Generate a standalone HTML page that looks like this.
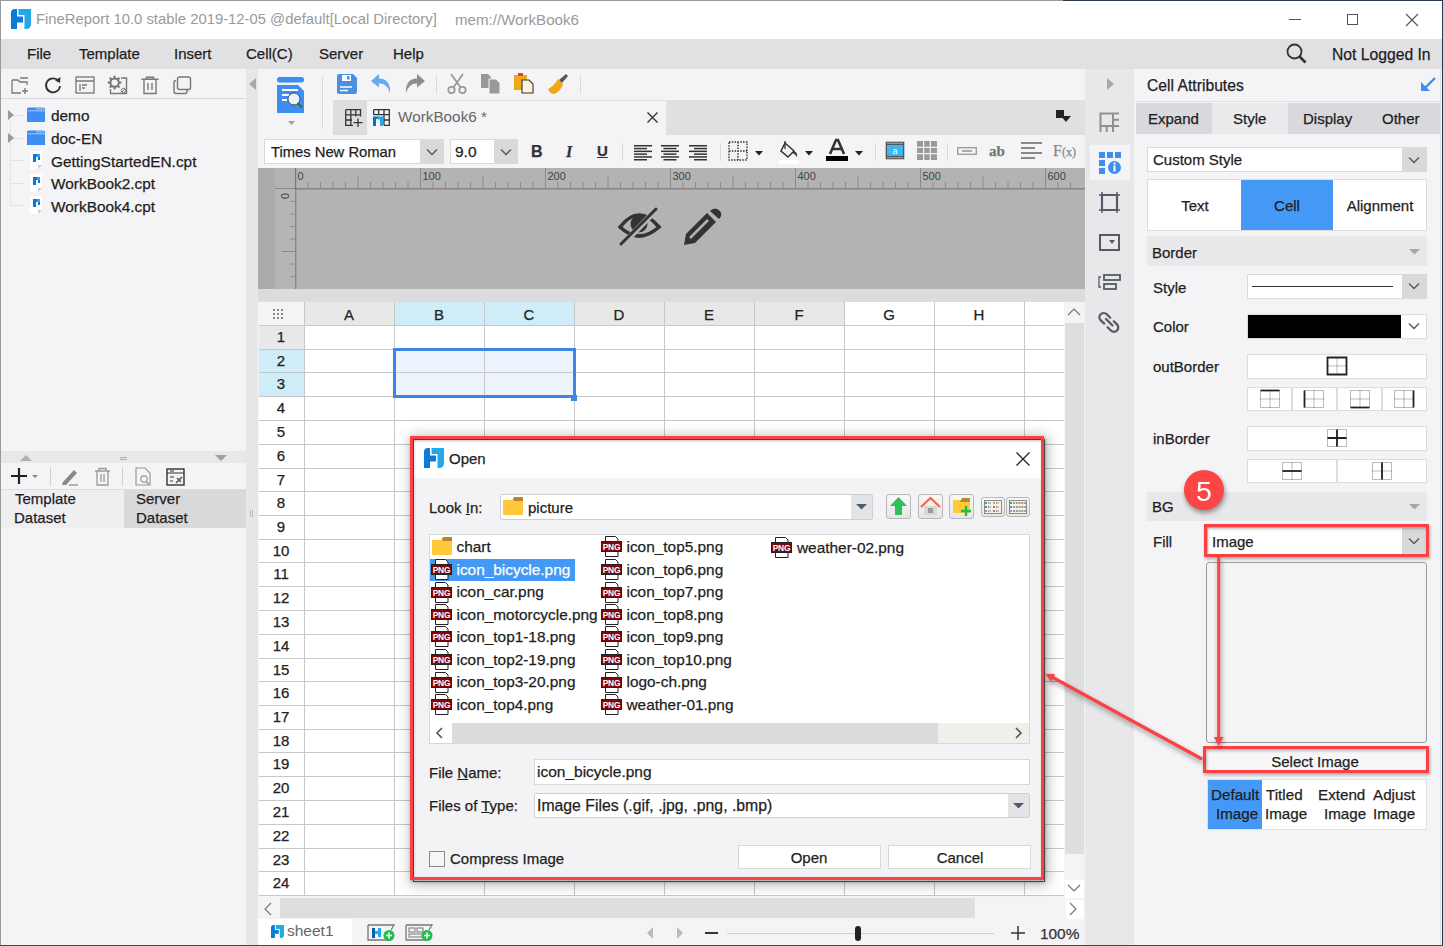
<!DOCTYPE html><html><head><meta charset="utf-8"><style>
html,body{margin:0;padding:0;width:1443px;height:946px;overflow:hidden;background:#f4f4f6}
body{position:relative;font-family:"Liberation Sans",sans-serif}
div{position:absolute}
.t{position:absolute;white-space:pre;line-height:1;font-family:"Liberation Sans",sans-serif;-webkit-text-stroke:0.25px currentColor}
svg{overflow:visible}
</style></head><body>
<div style="left:0px;top:0px;width:1443px;height:39px;background:#ffffff;"></div>
<div style="left:0px;top:0px;width:1443px;height:1px;background:#9a9a9a;"></div>
<div style="left:1063px;top:0px;width:380px;height:1px;background:#2b3a4a;"></div>
<svg style="position:absolute;left:11px;top:9px;" width="20" height="20" viewBox="0 0 20 20"><g transform="scale(1.0)"><path d="M4 0 H6 V7.5 H12 V13.5 H6 V20 H0 V4 Q0 0 4 0Z" fill="#0a7bd8"/><path d="M7.5 0 H20 V15 Q20 20 15 20 H13.5 V6 H7.5Z" fill="#22a9e6"/></g></svg>
<span class="t" style="left:36px;top:12.44px;font-size:14.84px;color:#9a9a9a;-webkit-text-stroke:0">FineReport 10.0 stable 2019-12-05 @default[Local Directory]</span>
<span class="t" style="left:455px;top:12.22px;font-size:15.1px;color:#9a9a9a;-webkit-text-stroke:0">mem://WorkBook6</span>
<div style="left:1289px;top:19px;width:12px;height:1px;background:#555;"></div>
<div style="left:1347px;top:14px;width:11px;height:11px;background:transparent;border:1px solid #555;box-sizing:border-box"></div>
<svg style="position:absolute;left:1405px;top:13px;" width="14" height="14" viewBox="0 0 14 14"><path d="M1 1 L13 13 M13 1 L1 13" stroke="#555" stroke-width="1.1"/></svg>
<div style="left:0px;top:39px;width:1443px;height:30px;background:#e1e1e4;"></div>
<span class="t" style="left:27px;top:46.30px;font-size:15px;color:#1e1e1e;">File</span>
<span class="t" style="left:79px;top:46.30px;font-size:15px;color:#1e1e1e;">Template</span>
<span class="t" style="left:174px;top:46.30px;font-size:15px;color:#1e1e1e;">Insert</span>
<span class="t" style="left:246px;top:46.30px;font-size:15px;color:#1e1e1e;">Cell(C)</span>
<span class="t" style="left:319px;top:46.30px;font-size:15px;color:#1e1e1e;">Server</span>
<span class="t" style="left:393px;top:46.30px;font-size:15px;color:#1e1e1e;">Help</span>
<svg style="position:absolute;left:1286px;top:43px;" width="22" height="22" viewBox="0 0 22 22"><circle cx="8.5" cy="8.5" r="7" fill="none" stroke="#333" stroke-width="1.8"/><path d="M13.5 13.5 L19.5 19.5" stroke="#333" stroke-width="2.6"/></svg>
<span class="t" style="left:1332px;top:46.71px;font-size:15.7px;color:#1e1e1e;">Not Logged In</span>
<div style="left:1px;top:69px;width:245px;height:876px;background:#f4f4f6;"></div>
<div style="left:0px;top:0px;width:1px;height:946px;background:#9a9a9a;"></div>
<div style="left:1px;top:98px;width:245px;height:1px;background:#d9d9db;"></div>
<svg style="position:absolute;left:11px;top:76px;" width="20" height="18" viewBox="0 0 20 18"><path d="M1 4 H7 L9 6 H16 V9 M1 4 V17 H10" fill="none" stroke="#777" stroke-width="1.3"/><path d="M9 2 H17 M14 12 V18 M11 15 H17" stroke="#777" stroke-width="1.3"/></svg>
<svg style="position:absolute;left:44px;top:76px;" width="18" height="18" viewBox="0 0 18 18"><path d="M14.5 5 A7 7 0 1 0 16 10" fill="none" stroke="#333" stroke-width="1.9"/><path d="M11 4.5 L16.5 1 L16 7Z" fill="#333"/></svg>
<svg style="position:absolute;left:75px;top:76px;" width="20" height="18" viewBox="0 0 20 18"><rect x="1" y="1" width="18" height="16" fill="none" stroke="#777" stroke-width="1.3"/><path d="M1 5 H19 M5 8 V15 M7 9 H12 M7 12 H10" stroke="#777" stroke-width="1.3"/></svg>
<svg style="position:absolute;left:108px;top:76px;" width="20" height="18" viewBox="0 0 20 18"><rect x="5.5" y="-0.2" width="2.2" height="3" transform="rotate(0 6.6 6.6)" fill="#777"/><rect x="5.5" y="-0.2" width="2.2" height="3" transform="rotate(45 6.6 6.6)" fill="#777"/><rect x="5.5" y="-0.2" width="2.2" height="3" transform="rotate(90 6.6 6.6)" fill="#777"/><rect x="5.5" y="-0.2" width="2.2" height="3" transform="rotate(135 6.6 6.6)" fill="#777"/><rect x="5.5" y="-0.2" width="2.2" height="3" transform="rotate(180 6.6 6.6)" fill="#777"/><rect x="5.5" y="-0.2" width="2.2" height="3" transform="rotate(225 6.6 6.6)" fill="#777"/><rect x="5.5" y="-0.2" width="2.2" height="3" transform="rotate(270 6.6 6.6)" fill="#777"/><rect x="5.5" y="-0.2" width="2.2" height="3" transform="rotate(315 6.6 6.6)" fill="#777"/><circle cx="6.6" cy="6.6" r="4.2" fill="none" stroke="#777" stroke-width="2"/><path d="M13 2 H18.5 V17.5 H2.5 V13" fill="none" stroke="#777" stroke-width="1.4"/><circle cx="15.5" cy="14.5" r="2.2" fill="none" stroke="#777" stroke-width="1"/><path d="M14 16 L17 13" stroke="#777" stroke-width="1"/></svg>
<svg style="position:absolute;left:141px;top:76px;" width="18" height="18" viewBox="0 0 18 18"><path d="M0.5 3.3 H17.5 M5.5 3.3 V1.2 H12.5 V3.3 M3 4 V17.5 H15 V4 M7 7 V14 M11 7 V14" fill="none" stroke="#777" stroke-width="1.4"/></svg>
<svg style="position:absolute;left:173px;top:76px;" width="19" height="18" viewBox="0 0 19 18"><rect x="4.5" y="1" width="13" height="12.5" rx="2" fill="none" stroke="#777" stroke-width="1.4"/><path d="M3 4.5 Q1 4.5 1 6.5 V15.5 Q1 17.5 3 17.5 H12 Q14 17.5 14 15.5 V14" fill="none" stroke="#777" stroke-width="1.4"/></svg>
<div style="left:10px;top:122px;width:1px;height:84px;background:#e2e2e4;"></div>
<div style="left:11px;top:160px;width:13px;height:1px;background:#e2e2e4;"></div>
<div style="left:11px;top:183px;width:13px;height:1px;background:#e2e2e4;"></div>
<div style="left:11px;top:205px;width:13px;height:1px;background:#e2e2e4;"></div>
<div style="left:14px;top:115px;width:10px;height:1px;background:#e2e2e4;"></div>
<div style="left:14px;top:138px;width:10px;height:1px;background:#e2e2e4;"></div>
<svg style="position:absolute;left:8px;top:110px;" width="7" height="10" viewBox="0 0 7 10"><path d="M0 0 L6 5 L0 10Z" fill="#999"/></svg>
<svg style="position:absolute;left:27px;top:107px;" width="18" height="15" viewBox="0 0 18 15"><path d="M0 2 Q0 0.5 1.5 0.5 H16.5 Q18 0.5 18 2 V15 H0Z" fill="#3d8ef0"/><path d="M9 1.8 H17 M0.5 3.8 H18" stroke="#ffffff" stroke-width="0.9" opacity="0.6"/></svg>
<span class="t" style="left:51px;top:108.46px;font-size:15.4px;color:#1e1e1e;">demo</span>
<svg style="position:absolute;left:8px;top:133px;" width="7" height="10" viewBox="0 0 7 10"><path d="M0 0 L6 5 L0 10Z" fill="#999"/></svg>
<svg style="position:absolute;left:27px;top:130px;" width="18" height="15" viewBox="0 0 18 15"><path d="M0 2 Q0 0.5 1.5 0.5 H16.5 Q18 0.5 18 2 V15 H0Z" fill="#3d8ef0"/><path d="M9 1.8 H17 M0.5 3.8 H18" stroke="#ffffff" stroke-width="0.9" opacity="0.6"/></svg>
<span class="t" style="left:51px;top:131.06px;font-size:15.4px;color:#1e1e1e;">doc-EN</span>
<svg style="position:absolute;left:28px;top:151px;" width="16" height="18" viewBox="0 0 16 18"><path d="M2 0 H14 V14 L10 18 H2Z" fill="#fff"/><path d="M14 14 L10 18 V14Z" fill="#ccc"/><path d="M5 3 H12 V9 H10 V6 H8 V11 H5Z" fill="#0b78d6"/><rect x="9" y="3" width="3" height="3" fill="#29a7ea"/></svg>
<span class="t" style="left:51px;top:153.66px;font-size:15.4px;color:#1e1e1e;">GettingStartedEN.cpt</span>
<svg style="position:absolute;left:28px;top:174px;" width="16" height="18" viewBox="0 0 16 18"><path d="M2 0 H14 V14 L10 18 H2Z" fill="#fff"/><path d="M14 14 L10 18 V14Z" fill="#ccc"/><path d="M5 3 H12 V9 H10 V6 H8 V11 H5Z" fill="#0b78d6"/><rect x="9" y="3" width="3" height="3" fill="#29a7ea"/></svg>
<span class="t" style="left:51px;top:176.26px;font-size:15.4px;color:#1e1e1e;">WorkBook2.cpt</span>
<svg style="position:absolute;left:28px;top:196px;" width="16" height="18" viewBox="0 0 16 18"><path d="M2 0 H14 V14 L10 18 H2Z" fill="#fff"/><path d="M14 14 L10 18 V14Z" fill="#ccc"/><path d="M5 3 H12 V9 H10 V6 H8 V11 H5Z" fill="#0b78d6"/><rect x="9" y="3" width="3" height="3" fill="#29a7ea"/></svg>
<span class="t" style="left:51px;top:198.86px;font-size:15.4px;color:#1e1e1e;">WorkBook4.cpt</span>
<div style="left:1px;top:451px;width:245px;height:12px;background:#e8e8ea;"></div>
<svg style="position:absolute;left:20px;top:455px;" width="12" height="6" viewBox="0 0 12 6"><path d="M0 6 L6 0 L12 6Z" fill="#b0b0b0"/></svg>
<div style="left:120px;top:457px;width:7px;height:1px;background:#b0b0b0;"></div>
<div style="left:120px;top:459px;width:7px;height:1px;background:#b0b0b0;"></div>
<svg style="position:absolute;left:215px;top:455px;" width="12" height="6" viewBox="0 0 12 6"><path d="M0 0 L6 6 L12 0Z" fill="#a0a0a0"/></svg>
<svg style="position:absolute;left:10px;top:466px;" width="30" height="20" viewBox="0 0 30 20"><path d="M9 2 V18 M1 10 H17" stroke="#222" stroke-width="2.2"/><path d="M22 9 H28 L25 12Z" fill="#888"/></svg>
<div style="left:50px;top:467px;width:1px;height:19px;background:#d0d0d0;"></div>
<svg style="position:absolute;left:61px;top:467px;" width="18" height="19" viewBox="0 0 18 19"><path d="M2 15 L13 3 L16 6 L5 18 L1 18Z" fill="#888"/><path d="M8 18 H17" stroke="#888" stroke-width="1.2"/></svg>
<svg style="position:absolute;left:94px;top:467px;" width="17" height="19" viewBox="0 0 17 19"><path d="M1 4 H16 M5 4 V1.5 H12 V4 M3 4 V18 H14 V4 M7 7 V15 M10 7 V15" fill="none" stroke="#999" stroke-width="1.3"/></svg>
<div style="left:122px;top:467px;width:1px;height:19px;background:#d0d0d0;"></div>
<svg style="position:absolute;left:135px;top:467px;" width="16" height="19" viewBox="0 0 16 19"><path d="M1 1 H10 L15 6 V18 H1Z" fill="none" stroke="#999" stroke-width="1.2"/><circle cx="9" cy="12" r="3.2" fill="none" stroke="#999" stroke-width="1.2"/><path d="M11 14.5 L14 17.5" stroke="#999" stroke-width="1.4"/></svg>
<svg style="position:absolute;left:166px;top:468px;" width="19" height="18" viewBox="0 0 19 18"><rect x="1" y="1" width="17" height="16" fill="none" stroke="#333" stroke-width="1.4"/><path d="M1 5 H18 M4 3 H8 M4 9 H8 M4 13 H7" stroke="#333" stroke-width="1.2"/><path d="M10 15 L16 9 M11 10 L15 14" stroke="#555" stroke-width="1.6"/></svg>
<div style="left:1px;top:489px;width:245px;height:1px;background:#dddddf;"></div>
<div style="left:1px;top:490px;width:123px;height:38px;background:#efeff2;"></div>
<div style="left:124px;top:490px;width:122px;height:38px;background:#d9d9dc;"></div>
<span class="t" style="left:15px;top:491.30px;font-size:15px;color:#1e1e1e;">Template</span>
<span class="t" style="left:14px;top:510.30px;font-size:15px;color:#1e1e1e;">Dataset</span>
<span class="t" style="left:136px;top:491.30px;font-size:15px;color:#1e1e1e;">Server</span>
<span class="t" style="left:136px;top:510.30px;font-size:15px;color:#1e1e1e;">Dataset</span>
<div style="left:246px;top:69px;width:12px;height:876px;background:#e7e7e9;"></div>
<svg style="position:absolute;left:249px;top:78px;" width="7" height="12" viewBox="0 0 7 12"><path d="M7 0 L0 6 L7 12Z" fill="#a8a8a8"/></svg>
<div style="left:250px;top:510px;width:1px;height:7px;background:#b8b8b8;"></div>
<div style="left:252px;top:510px;width:1px;height:7px;background:#b8b8b8;"></div>
<div style="left:258px;top:69px;width:827px;height:98px;background:#f4f4f6;"></div>
<svg style="position:absolute;left:277px;top:77px;" width="27" height="37" viewBox="0 0 27 37"><rect x="0" y="0" width="27" height="5.5" rx="2.5" fill="#3d8ef0"/><path d="M0 8 H21 L27 14 V36 H0Z" fill="#3d8ef0"/><path d="M5 13 H21 M5 18 H12 M5 23 H10" stroke="#fff" stroke-width="2"/><circle cx="17" cy="22" r="6" fill="#e8f1fc" stroke="#333" stroke-width="0.8"/><path d="M20.5 26 L25 30.5" stroke="#555" stroke-width="1.8"/></svg>
<svg style="position:absolute;left:288px;top:121px;" width="7" height="4" viewBox="0 0 7 4"><path d="M0 0 H7 L3.5 4Z" fill="#a0a0a0"/></svg>
<div style="left:322px;top:77px;width:1px;height:52px;background:#d8d8d8;"></div>
<svg style="position:absolute;left:337px;top:74px;" width="20" height="20" viewBox="0 0 20 20"><path d="M0 2 Q0 0 2 0 H16 L20 4 V18 Q20 20 18 20 H2 Q0 20 0 18Z" fill="#4a90e2"/><rect x="5" y="1" width="9" height="6" fill="#fff"/><rect x="10" y="2" width="2.5" height="3.5" fill="#4a90e2"/><path d="M3 13 H15 M3 16.5 H11" stroke="#fff" stroke-width="1.5"/></svg>
<svg style="position:absolute;left:371px;top:74px;" width="21" height="20" viewBox="0 0 21 20"><path d="M8 0 L0 7 L8 13.5 V9.5 Q16 9 19 19 Q20 5 8 4.5Z" fill="#6aaaf0"/></svg>
<svg style="position:absolute;left:404px;top:74px;" width="21" height="20" viewBox="0 0 21 20"><path d="M13 0 L21 7 L13 13.5 V9.5 Q5 9 2 19 Q1 5 13 4.5Z" fill="#8e8e8e"/></svg>
<div style="left:436px;top:75px;width:1px;height:19px;background:#d8d8d8;"></div>
<svg style="position:absolute;left:447px;top:74px;" width="21" height="20" viewBox="0 0 21 20"><path d="M4 0 L14 14 M16 0 L6 14" stroke="#999" stroke-width="1.8"/><circle cx="4.5" cy="16" r="3.2" fill="none" stroke="#999" stroke-width="1.8"/><circle cx="15.5" cy="16" r="3.2" fill="none" stroke="#999" stroke-width="1.8"/></svg>
<svg style="position:absolute;left:481px;top:74px;" width="21" height="20" viewBox="0 0 21 20"><path d="M0 0 H7 L10 3 V14 H0Z" fill="#999"/><path d="M8 5 H15 L19 9 V20 H8Z" fill="#999" stroke="#f4f4f6" stroke-width="1"/></svg>
<svg style="position:absolute;left:514px;top:73px;" width="22" height="21" viewBox="0 0 22 21"><rect x="0" y="2" width="13" height="15" fill="#f0a818"/><rect x="4" y="0" width="5" height="3" fill="#e04040"/><path d="M8 7 H15 L19 11 V20 H8Z" fill="#fdf3dc" stroke="#333" stroke-width="1.1"/></svg>
<svg style="position:absolute;left:548px;top:74px;" width="21" height="20" viewBox="0 0 21 20"><path d="M11 6 L18 0 L20 2 L14 9Z" fill="#555"/><path d="M10 5 L15 10 Q12 18 6 20 Q2 20 0 15 Q6 12 10 5Z" fill="#f0a818"/></svg>
<div style="left:580px;top:75px;width:1px;height:19px;background:#d8d8d8;"></div>
<div style="left:333px;top:100px;width:752px;height:35px;background:#e0e0e3;"></div>
<div style="left:333px;top:100px;width:34px;height:35px;background:#dddde0;"></div>
<svg style="position:absolute;left:345px;top:109px;" width="18" height="18" viewBox="0 0 18 18"><path d="M0.7 0.7 H15.5 V7.5 M0.7 0.7 V16.3 H8 M0.7 5.8 H15.5 M0.7 11 H7 M5.8 0.7 V16.3 M10.8 0.7 V7.5" fill="none" stroke="#333" stroke-width="1.3"/><path d="M13 9.5 V18 M8.5 13.7 H17.5" stroke="#333" stroke-width="1.3"/></svg>
<div style="left:367px;top:101px;width:299px;height:34px;background:#f4f4f6;"></div>
<svg style="position:absolute;left:373px;top:109px;" width="17" height="17" viewBox="0 0 17 17"><path d="M0.7 0.7 H16.3 V16.3 H11 M0.7 0.7 V6 M0.7 5.6 H16.3 M11 11 H16.3 M5.7 0.7 V5.6 M11 0.7 V16.3" fill="none" stroke="#333" stroke-width="1.3"/><path d="M0 7.5 H6 V10 H3 V17 H0Z" fill="#0a6fc8"/><path d="M4.5 7.5 H10 V17 H7 V10.5 H4.5Z" fill="#29a7ea"/></svg>
<span class="t" style="left:398px;top:109.05px;font-size:15.3px;color:#666;-webkit-text-stroke:0">WorkBook6 *</span>
<svg style="position:absolute;left:647px;top:112px;" width="11" height="11" viewBox="0 0 11 11"><path d="M0.5 0.5 L10.5 10.5 M10.5 0.5 L0.5 10.5" stroke="#333" stroke-width="1.4"/></svg>
<svg style="position:absolute;left:1055px;top:109px;" width="17" height="15" viewBox="0 0 17 15"><rect x="1" y="1" width="8" height="8" fill="#222"/><path d="M6 7 H16 L11 13Z" fill="#222"/></svg>
<div style="left:264px;top:139px;width:180px;height:25px;background:#d9d9dc;"></div>
<div style="left:265px;top:140px;width:155px;height:23px;background:#ffffff;"></div>
<div style="left:420px;top:139px;width:24px;height:25px;background:#d9d9dc;"></div>
<svg style="position:absolute;left:426px;top:148px;" width="12" height="8" viewBox="0 0 12 8"><path d="M1 1.5 L6 6.5 L11 1.5" fill="none" stroke="#555" stroke-width="1.3"/></svg>
<span class="t" style="left:271px;top:144.50px;font-size:14.77px;color:#1e1e1e;">Times New Roman</span>
<div style="left:450px;top:139px;width:68px;height:25px;background:#d9d9dc;"></div>
<div style="left:451px;top:140px;width:43px;height:23px;background:#ffffff;"></div>
<div style="left:494px;top:139px;width:24px;height:25px;background:#d9d9dc;"></div>
<svg style="position:absolute;left:500px;top:148px;" width="12" height="8" viewBox="0 0 12 8"><path d="M1 1.5 L6 6.5 L11 1.5" fill="none" stroke="#555" stroke-width="1.3"/></svg>
<span class="t" style="left:455px;top:143.88px;font-size:15.5px;color:#1e1e1e;">9.0</span>
<span class="t" style="left:531px;top:144.46px;font-size:16px;color:#333;font-weight:bold">B</span>
<span class="t" style="left:566px;top:144.46px;font-size:16px;color:#333;font-style:italic;font-weight:bold;font-family:Liberation Serif">I</span>
<span class="t" style="left:597px;top:143.30px;font-size:15px;color:#333;font-weight:bold;text-decoration:underline">U</span>
<div style="left:622px;top:143px;width:1px;height:18px;background:#d8d8d8;"></div>
<svg style="position:absolute;left:634px;top:144px;" width="18" height="18" viewBox="0 0 18 18"><rect x="0" y="1.0" width="18" height="1.5" fill="#333"/><rect x="0" y="3.8" width="13" height="1.5" fill="#333"/><rect x="0" y="6.6" width="18" height="1.5" fill="#333"/><rect x="0" y="9.4" width="13" height="1.5" fill="#333"/><rect x="0" y="12.2" width="18" height="1.5" fill="#333"/><rect x="0" y="15.0" width="13" height="1.5" fill="#333"/></svg>
<svg style="position:absolute;left:661px;top:144px;" width="18" height="18" viewBox="0 0 18 18"><rect x="0.0" y="1.0" width="18" height="1.5" fill="#333"/><rect x="2.5" y="3.8" width="13" height="1.5" fill="#333"/><rect x="0.0" y="6.6" width="18" height="1.5" fill="#333"/><rect x="2.5" y="9.4" width="13" height="1.5" fill="#333"/><rect x="0.0" y="12.2" width="18" height="1.5" fill="#333"/><rect x="2.5" y="15.0" width="13" height="1.5" fill="#333"/></svg>
<svg style="position:absolute;left:689px;top:144px;" width="18" height="18" viewBox="0 0 18 18"><rect x="0" y="1.0" width="18" height="1.5" fill="#333"/><rect x="5" y="3.8" width="13" height="1.5" fill="#333"/><rect x="0" y="6.6" width="18" height="1.5" fill="#333"/><rect x="5" y="9.4" width="13" height="1.5" fill="#333"/><rect x="0" y="12.2" width="18" height="1.5" fill="#333"/><rect x="5" y="15.0" width="13" height="1.5" fill="#333"/></svg>
<div style="left:720px;top:143px;width:1px;height:18px;background:#d8d8d8;"></div>
<svg style="position:absolute;left:728px;top:141px;" width="20" height="20" viewBox="0 0 20 20"><path d="M1 1 H19 V19 H1Z M10 1 V19 M1 10 H19" fill="none" stroke="#333" stroke-width="1.4" stroke-dasharray="1.5 1.3"/></svg>
<svg style="position:absolute;left:755px;top:151px;" width="8" height="5" viewBox="0 0 8 5"><path d="M0 0 H8 L4 4.5Z" fill="#222"/></svg>
<svg style="position:absolute;left:779px;top:141px;" width="20" height="24" viewBox="0 0 20 24"><path d="M6 2 L15 10 L9 16 L2 10Z" fill="none" stroke="#333" stroke-width="1.5"/><path d="M6 0 V8" stroke="#333" stroke-width="1.3"/><path d="M15 10 Q19 12 18 16 Q15 12 13 12Z" fill="#333"/><rect x="0" y="19" width="20" height="4" fill="#fff"/></svg>
<svg style="position:absolute;left:805px;top:151px;" width="8" height="5" viewBox="0 0 8 5"><path d="M0 0 H8 L4 4.5Z" fill="#222"/></svg>
<svg style="position:absolute;left:826px;top:139px;" width="22" height="24" viewBox="0 0 22 24"><path d="M4 15 L10 1 H12 L18 15 M6.5 10 H15.5" fill="none" stroke="#333" stroke-width="2.6"/><rect x="0" y="17" width="22" height="5" fill="#000"/></svg>
<svg style="position:absolute;left:855px;top:151px;" width="8" height="5" viewBox="0 0 8 5"><path d="M0 0 H8 L4 4.5Z" fill="#222"/></svg>
<div style="left:875px;top:143px;width:1px;height:18px;background:#d8d8d8;"></div>
<svg style="position:absolute;left:885px;top:141px;" width="20" height="19" viewBox="0 0 20 19"><rect x="0.7" y="0.7" width="18.6" height="17.6" fill="#555"/><rect x="2" y="4" width="16" height="11" fill="#38b8f2"/><text x="10" y="13" font-size="9" text-anchor="middle" fill="#fff" font-family="Liberation Sans">a</text><path d="M2 2.3 H18 M2 16.7 H18" stroke="#aaa" stroke-width="1"/></svg>
<svg style="position:absolute;left:917px;top:141px;" width="20" height="19" viewBox="0 0 20 19"><rect x="0" y="0" width="20" height="19" fill="#999"/><path d="M0 6.3 H20 M0 12.6 H20 M6.6 0 V19 M13.3 0 V19" stroke="#f4f4f6" stroke-width="1.2"/></svg>
<div style="left:947px;top:143px;width:1px;height:18px;background:#d8d8d8;"></div>
<svg style="position:absolute;left:957px;top:147px;" width="20" height="8" viewBox="0 0 20 8"><rect x="0.7" y="0.7" width="18.6" height="6.6" fill="none" stroke="#999" stroke-width="1.3"/><rect x="5" y="3.2" width="10" height="1.6" fill="#999"/></svg>
<span class="t" style="left:989px;top:144.30px;font-size:15px;color:#777;font-weight:bold;font-family:Liberation Serif">ab</span>
<svg style="position:absolute;left:1021px;top:142px;" width="21" height="18" viewBox="0 0 21 18"><path d="M0 1 H21 M0 6 H14 M0 11 H21 M0 16 H14" stroke="#888" stroke-width="2"/></svg>
<span class="t" style="left:1053px;top:143.46px;font-size:16px;color:#888;font-family:Liberation Serif">F<span style="font-size:12px">(x)</span></span>
<div style="left:258px;top:168px;width:827px;height:121px;background:#b3b3b3;"></div>
<div style="left:258px;top:168px;width:17px;height:121px;background:#ababab;"></div>
<svg style="position:absolute;left:258px;top:168px;" width="827" height="22" viewBox="0 0 827 22"><path d="M37.5 0 V20" stroke="#8a8a8a" stroke-width="1"/><text x="39.5" y="12" font-size="11" fill="#444" font-family="Liberation Sans">0</text><path d="M50.0 14 V20" stroke="#8a8a8a" stroke-width="1"/><path d="M62.5 14 V20" stroke="#8a8a8a" stroke-width="1"/><path d="M75.0 14 V20" stroke="#8a8a8a" stroke-width="1"/><path d="M87.5 14 V20" stroke="#8a8a8a" stroke-width="1"/><path d="M100.0 8 V20" stroke="#8a8a8a" stroke-width="1"/><path d="M112.5 14 V20" stroke="#8a8a8a" stroke-width="1"/><path d="M125.0 14 V20" stroke="#8a8a8a" stroke-width="1"/><path d="M137.5 14 V20" stroke="#8a8a8a" stroke-width="1"/><path d="M150.0 14 V20" stroke="#8a8a8a" stroke-width="1"/><path d="M162.5 0 V20" stroke="#8a8a8a" stroke-width="1"/><text x="164.5" y="12" font-size="11" fill="#444" font-family="Liberation Sans">100</text><path d="M175.0 14 V20" stroke="#8a8a8a" stroke-width="1"/><path d="M187.5 14 V20" stroke="#8a8a8a" stroke-width="1"/><path d="M200.0 14 V20" stroke="#8a8a8a" stroke-width="1"/><path d="M212.5 14 V20" stroke="#8a8a8a" stroke-width="1"/><path d="M225.0 8 V20" stroke="#8a8a8a" stroke-width="1"/><path d="M237.5 14 V20" stroke="#8a8a8a" stroke-width="1"/><path d="M250.0 14 V20" stroke="#8a8a8a" stroke-width="1"/><path d="M262.5 14 V20" stroke="#8a8a8a" stroke-width="1"/><path d="M275.0 14 V20" stroke="#8a8a8a" stroke-width="1"/><path d="M287.5 0 V20" stroke="#8a8a8a" stroke-width="1"/><text x="289.5" y="12" font-size="11" fill="#444" font-family="Liberation Sans">200</text><path d="M300.0 14 V20" stroke="#8a8a8a" stroke-width="1"/><path d="M312.5 14 V20" stroke="#8a8a8a" stroke-width="1"/><path d="M325.0 14 V20" stroke="#8a8a8a" stroke-width="1"/><path d="M337.5 14 V20" stroke="#8a8a8a" stroke-width="1"/><path d="M350.0 8 V20" stroke="#8a8a8a" stroke-width="1"/><path d="M362.5 14 V20" stroke="#8a8a8a" stroke-width="1"/><path d="M375.0 14 V20" stroke="#8a8a8a" stroke-width="1"/><path d="M387.5 14 V20" stroke="#8a8a8a" stroke-width="1"/><path d="M400.0 14 V20" stroke="#8a8a8a" stroke-width="1"/><path d="M412.5 0 V20" stroke="#8a8a8a" stroke-width="1"/><text x="414.5" y="12" font-size="11" fill="#444" font-family="Liberation Sans">300</text><path d="M425.0 14 V20" stroke="#8a8a8a" stroke-width="1"/><path d="M437.5 14 V20" stroke="#8a8a8a" stroke-width="1"/><path d="M450.0 14 V20" stroke="#8a8a8a" stroke-width="1"/><path d="M462.5 14 V20" stroke="#8a8a8a" stroke-width="1"/><path d="M475.0 8 V20" stroke="#8a8a8a" stroke-width="1"/><path d="M487.5 14 V20" stroke="#8a8a8a" stroke-width="1"/><path d="M500.0 14 V20" stroke="#8a8a8a" stroke-width="1"/><path d="M512.5 14 V20" stroke="#8a8a8a" stroke-width="1"/><path d="M525.0 14 V20" stroke="#8a8a8a" stroke-width="1"/><path d="M537.5 0 V20" stroke="#8a8a8a" stroke-width="1"/><text x="539.5" y="12" font-size="11" fill="#444" font-family="Liberation Sans">400</text><path d="M550.0 14 V20" stroke="#8a8a8a" stroke-width="1"/><path d="M562.5 14 V20" stroke="#8a8a8a" stroke-width="1"/><path d="M575.0 14 V20" stroke="#8a8a8a" stroke-width="1"/><path d="M587.5 14 V20" stroke="#8a8a8a" stroke-width="1"/><path d="M600.0 8 V20" stroke="#8a8a8a" stroke-width="1"/><path d="M612.5 14 V20" stroke="#8a8a8a" stroke-width="1"/><path d="M625.0 14 V20" stroke="#8a8a8a" stroke-width="1"/><path d="M637.5 14 V20" stroke="#8a8a8a" stroke-width="1"/><path d="M650.0 14 V20" stroke="#8a8a8a" stroke-width="1"/><path d="M662.5 0 V20" stroke="#8a8a8a" stroke-width="1"/><text x="664.5" y="12" font-size="11" fill="#444" font-family="Liberation Sans">500</text><path d="M675.0 14 V20" stroke="#8a8a8a" stroke-width="1"/><path d="M687.5 14 V20" stroke="#8a8a8a" stroke-width="1"/><path d="M700.0 14 V20" stroke="#8a8a8a" stroke-width="1"/><path d="M712.5 14 V20" stroke="#8a8a8a" stroke-width="1"/><path d="M725.0 8 V20" stroke="#8a8a8a" stroke-width="1"/><path d="M737.5 14 V20" stroke="#8a8a8a" stroke-width="1"/><path d="M750.0 14 V20" stroke="#8a8a8a" stroke-width="1"/><path d="M762.5 14 V20" stroke="#8a8a8a" stroke-width="1"/><path d="M775.0 14 V20" stroke="#8a8a8a" stroke-width="1"/><path d="M787.5 0 V20" stroke="#8a8a8a" stroke-width="1"/><text x="789.5" y="12" font-size="11" fill="#444" font-family="Liberation Sans">600</text><path d="M800.0 14 V20" stroke="#8a8a8a" stroke-width="1"/><path d="M812.5 14 V20" stroke="#8a8a8a" stroke-width="1"/><rect x="17" y="20" width="810" height="1.6" fill="#888"/><rect x="37" y="0" width="1.2" height="22" fill="#777"/></svg>
<svg style="position:absolute;left:275px;top:189px;" width="22" height="100" viewBox="0 0 22 100"><rect x="0" y="0" width="21" height="101" fill="#b5b5b5"/><rect x="20" y="0" width="1.4" height="101" fill="#888"/><path d="M15 12.5 H21" stroke="#8a8a8a" stroke-width="1"/><path d="M15 25.0 H21" stroke="#8a8a8a" stroke-width="1"/><path d="M15 37.5 H21" stroke="#8a8a8a" stroke-width="1"/><path d="M15 50.0 H21" stroke="#8a8a8a" stroke-width="1"/><path d="M7 62.5 H21" stroke="#8a8a8a" stroke-width="1"/><path d="M15 75.0 H21" stroke="#8a8a8a" stroke-width="1"/><path d="M15 87.5 H21" stroke="#8a8a8a" stroke-width="1"/><text transform="translate(10,7) rotate(90)" font-size="11" fill="#444" font-family="Liberation Sans" text-anchor="middle" y="4">0</text></svg>
<svg style="position:absolute;left:619px;top:207px;" width="41" height="39" viewBox="0 0 41 39"><path d="M1 20 Q20 -4 40 20 Q20 38 1 20Z" fill="none" stroke="#333" stroke-width="3.6"/><circle cx="20" cy="17" r="8.5" fill="#333"/><path d="M5 36 L37 3" stroke="#b3b3b3" stroke-width="6"/><path d="M2 37 L37 2" stroke="#333" stroke-width="3" stroke-linecap="round"/></svg>
<svg style="position:absolute;left:683px;top:207px;" width="39" height="39" viewBox="0 0 39 39"><path d="M1 38 L3 27 L24 6 L33 15 L12 36Z" fill="#333"/><path d="M7 31 L25 13" stroke="#b3b3b3" stroke-width="2.5"/><path d="M27 4 Q32 -1 37 4 Q40 8 36 12Z" fill="#333"/></svg>
<div style="left:258px;top:289px;width:827px;height:13px;background:#dcdcde;"></div>
<div style="left:259px;top:302px;width:805px;height:594px;background:#ffffff;"></div>
<div style="left:259px;top:302px;width:45px;height:23px;background:#f4f4f6;"></div>
<div style="left:304px;top:302px;width:540px;height:23px;background:#e8e8e8;"></div>
<div style="left:394px;top:302px;width:180px;height:23px;background:#cfedf9;"></div>
<div style="left:259px;top:325px;width:45px;height:571px;background:#e8e8e8;"></div>
<div style="left:259px;top:349px;width:45px;height:47px;background:#cfedf9;"></div>
<div style="left:259px;top:396px;width:45px;height:500px;background:#ffffff;"></div>
<div style="left:394px;top:349px;width:180px;height:47px;background:#ecf3fc;"></div>
<div style="left:304px;top:302px;width:1px;height:594px;background:#c8c8c8;"></div>
<div style="left:394px;top:302px;width:1px;height:594px;background:#c8c8c8;"></div>
<div style="left:484px;top:302px;width:1px;height:594px;background:#c8c8c8;"></div>
<div style="left:574px;top:302px;width:1px;height:594px;background:#c8c8c8;"></div>
<div style="left:664px;top:302px;width:1px;height:594px;background:#c8c8c8;"></div>
<div style="left:754px;top:302px;width:1px;height:594px;background:#c8c8c8;"></div>
<div style="left:844px;top:302px;width:1px;height:594px;background:#c8c8c8;"></div>
<div style="left:934px;top:302px;width:1px;height:594px;background:#c8c8c8;"></div>
<div style="left:1024px;top:302px;width:1px;height:594px;background:#c8c8c8;"></div>
<div style="left:259px;top:325px;width:805px;height:1px;background:#c8c8c8;"></div>
<div style="left:259px;top:349px;width:805px;height:1px;background:#c8c8c8;"></div>
<div style="left:259px;top:372px;width:805px;height:1px;background:#c8c8c8;"></div>
<div style="left:259px;top:396px;width:805px;height:1px;background:#c8c8c8;"></div>
<div style="left:259px;top:420px;width:805px;height:1px;background:#c8c8c8;"></div>
<div style="left:259px;top:444px;width:805px;height:1px;background:#c8c8c8;"></div>
<div style="left:259px;top:468px;width:805px;height:1px;background:#c8c8c8;"></div>
<div style="left:259px;top:491px;width:805px;height:1px;background:#c8c8c8;"></div>
<div style="left:259px;top:515px;width:805px;height:1px;background:#c8c8c8;"></div>
<div style="left:259px;top:539px;width:805px;height:1px;background:#c8c8c8;"></div>
<div style="left:259px;top:562px;width:805px;height:1px;background:#c8c8c8;"></div>
<div style="left:259px;top:586px;width:805px;height:1px;background:#c8c8c8;"></div>
<div style="left:259px;top:610px;width:805px;height:1px;background:#c8c8c8;"></div>
<div style="left:259px;top:634px;width:805px;height:1px;background:#c8c8c8;"></div>
<div style="left:259px;top:658px;width:805px;height:1px;background:#c8c8c8;"></div>
<div style="left:259px;top:681px;width:805px;height:1px;background:#c8c8c8;"></div>
<div style="left:259px;top:705px;width:805px;height:1px;background:#c8c8c8;"></div>
<div style="left:259px;top:729px;width:805px;height:1px;background:#c8c8c8;"></div>
<div style="left:259px;top:752px;width:805px;height:1px;background:#c8c8c8;"></div>
<div style="left:259px;top:776px;width:805px;height:1px;background:#c8c8c8;"></div>
<div style="left:259px;top:800px;width:805px;height:1px;background:#c8c8c8;"></div>
<div style="left:259px;top:824px;width:805px;height:1px;background:#c8c8c8;"></div>
<div style="left:259px;top:848px;width:805px;height:1px;background:#c8c8c8;"></div>
<div style="left:259px;top:871px;width:805px;height:1px;background:#c8c8c8;"></div>
<div style="left:259px;top:895px;width:805px;height:1px;background:#c8c8c8;"></div>
<span class="t" style="left:49px;width:600px;text-align:center;top:307.30px;font-size:15px;color:#222;">A</span>
<span class="t" style="left:139px;width:600px;text-align:center;top:307.30px;font-size:15px;color:#222;">B</span>
<span class="t" style="left:229px;width:600px;text-align:center;top:307.30px;font-size:15px;color:#222;">C</span>
<span class="t" style="left:319px;width:600px;text-align:center;top:307.30px;font-size:15px;color:#222;">D</span>
<span class="t" style="left:409px;width:600px;text-align:center;top:307.30px;font-size:15px;color:#222;">E</span>
<span class="t" style="left:499px;width:600px;text-align:center;top:307.30px;font-size:15px;color:#222;">F</span>
<span class="t" style="left:589px;width:600px;text-align:center;top:307.30px;font-size:15px;color:#222;">G</span>
<span class="t" style="left:679px;width:600px;text-align:center;top:307.30px;font-size:15px;color:#222;">H</span>
<span class="t" style="left:-19px;width:600px;text-align:center;top:329.30px;font-size:15px;color:#222;">1</span>
<span class="t" style="left:-19px;width:600px;text-align:center;top:353.30px;font-size:15px;color:#222;">2</span>
<span class="t" style="left:-19px;width:600px;text-align:center;top:376.30px;font-size:15px;color:#222;">3</span>
<span class="t" style="left:-19px;width:600px;text-align:center;top:400.30px;font-size:15px;color:#222;">4</span>
<span class="t" style="left:-19px;width:600px;text-align:center;top:424.30px;font-size:15px;color:#222;">5</span>
<span class="t" style="left:-19px;width:600px;text-align:center;top:448.30px;font-size:15px;color:#222;">6</span>
<span class="t" style="left:-19px;width:600px;text-align:center;top:472.30px;font-size:15px;color:#222;">7</span>
<span class="t" style="left:-19px;width:600px;text-align:center;top:495.30px;font-size:15px;color:#222;">8</span>
<span class="t" style="left:-19px;width:600px;text-align:center;top:519.30px;font-size:15px;color:#222;">9</span>
<span class="t" style="left:-19px;width:600px;text-align:center;top:543.30px;font-size:15px;color:#222;">10</span>
<span class="t" style="left:-19px;width:600px;text-align:center;top:566.30px;font-size:15px;color:#222;">11</span>
<span class="t" style="left:-19px;width:600px;text-align:center;top:590.30px;font-size:15px;color:#222;">12</span>
<span class="t" style="left:-19px;width:600px;text-align:center;top:614.30px;font-size:15px;color:#222;">13</span>
<span class="t" style="left:-19px;width:600px;text-align:center;top:638.30px;font-size:15px;color:#222;">14</span>
<span class="t" style="left:-19px;width:600px;text-align:center;top:662.30px;font-size:15px;color:#222;">15</span>
<span class="t" style="left:-19px;width:600px;text-align:center;top:685.30px;font-size:15px;color:#222;">16</span>
<span class="t" style="left:-19px;width:600px;text-align:center;top:709.30px;font-size:15px;color:#222;">17</span>
<span class="t" style="left:-19px;width:600px;text-align:center;top:733.30px;font-size:15px;color:#222;">18</span>
<span class="t" style="left:-19px;width:600px;text-align:center;top:756.30px;font-size:15px;color:#222;">19</span>
<span class="t" style="left:-19px;width:600px;text-align:center;top:780.30px;font-size:15px;color:#222;">20</span>
<span class="t" style="left:-19px;width:600px;text-align:center;top:804.30px;font-size:15px;color:#222;">21</span>
<span class="t" style="left:-19px;width:600px;text-align:center;top:828.30px;font-size:15px;color:#222;">22</span>
<span class="t" style="left:-19px;width:600px;text-align:center;top:852.30px;font-size:15px;color:#222;">23</span>
<span class="t" style="left:-19px;width:600px;text-align:center;top:875.30px;font-size:15px;color:#222;">24</span>
<svg style="position:absolute;left:273px;top:309px;" width="12" height="12" viewBox="0 0 12 12"><rect x="0" y="0" width="2" height="2" fill="#888"/><rect x="0" y="4" width="2" height="2" fill="#888"/><rect x="0" y="8" width="2" height="2" fill="#888"/><rect x="4" y="0" width="2" height="2" fill="#888"/><rect x="4" y="4" width="2" height="2" fill="#888"/><rect x="4" y="8" width="2" height="2" fill="#888"/><rect x="8" y="0" width="2" height="2" fill="#888"/><rect x="8" y="4" width="2" height="2" fill="#888"/><rect x="8" y="8" width="2" height="2" fill="#888"/></svg>
<div style="left:393px;top:348px;width:183px;height:50px;background:transparent;border:3px solid #3b87e6;box-sizing:border-box"></div>
<div style="left:571px;top:395px;width:6px;height:6px;background:#3b87e6;"></div>
<div style="left:1064px;top:302px;width:21px;height:617px;background:#f4f4f6;"></div>
<div style="left:1065px;top:323px;width:19px;height:531px;background:#dedede;"></div>
<svg style="position:absolute;left:1067px;top:307px;" width="14" height="10" viewBox="0 0 14 10"><path d="M1 8 L7 2 L13 8" fill="none" stroke="#777" stroke-width="1.2"/></svg>
<div style="left:1065px;top:880px;width:19px;height:18px;background:#ffffff;"></div>
<div style="left:1066px;top:900px;width:18px;height:20px;background:#ffffff;"></div>
<svg style="position:absolute;left:1067px;top:883px;" width="14" height="10" viewBox="0 0 14 10"><path d="M1 2 L7 8 L13 2" fill="none" stroke="#777" stroke-width="1.2"/></svg>
<div style="left:258px;top:896px;width:806px;height:23px;background:#f4f4f6;"></div>
<div style="left:280px;top:898px;width:695px;height:20px;background:#dedede;"></div>
<svg style="position:absolute;left:263px;top:902px;" width="10" height="14" viewBox="0 0 10 14"><path d="M8 1 L2 7 L8 13" fill="none" stroke="#777" stroke-width="1.2"/></svg>
<svg style="position:absolute;left:1068px;top:902px;" width="10" height="14" viewBox="0 0 10 14"><path d="M2 1 L8 7 L2 13" fill="none" stroke="#777" stroke-width="1.2"/></svg>
<div style="left:258px;top:919px;width:827px;height:26px;background:#f4f4f6;"></div>
<div style="left:258px;top:919px;width:94px;height:26px;background:#ffffff;"></div>
<svg style="position:absolute;left:271px;top:925px;" width="13" height="13" viewBox="0 0 13 13"><g transform="scale(0.65)"><path d="M4 0 H6 V7.5 H12 V13.5 H6 V20 H0 V4 Q0 0 4 0Z" fill="#0a7bd8"/><path d="M7.5 0 H20 V15 Q20 20 15 20 H13.5 V6 H7.5Z" fill="#22a9e6"/></g></svg>
<span class="t" style="left:287px;top:922.88px;font-size:15.5px;color:#666;-webkit-text-stroke:0">sheet1</span>
<svg style="position:absolute;left:367px;top:924px;" width="29" height="17" viewBox="0 0 29 17"><path d="M1 1 H27 L24 6 M1 1 V16 H22" fill="none" stroke="#777" stroke-width="1.3"/><path d="M5 4 H8 V14 H5Z" fill="#0b5fb0"/><path d="M8 7 H11 V4 H14 V13 H11 V10 H8Z" fill="#29a7ea"/><circle cx="22" cy="11.5" r="5.5" fill="#1fbf4a"/><path d="M22 8.5 V14.5 M19 11.5 H25" stroke="#fff" stroke-width="1.6"/></svg>
<svg style="position:absolute;left:405px;top:924px;" width="29" height="17" viewBox="0 0 29 17"><path d="M1 1 H27 L24 6 M1 1 V16 H22" fill="none" stroke="#777" stroke-width="1.3"/><rect x="4" y="4" width="6" height="4" fill="none" stroke="#777"/><rect x="12" y="4" width="6" height="4" fill="none" stroke="#777"/><rect x="4" y="10" width="14" height="3" fill="none" stroke="#777"/><circle cx="22" cy="11.5" r="5.5" fill="#1fbf4a"/><path d="M22 8.5 V14.5 M19 11.5 H25" stroke="#fff" stroke-width="1.6"/></svg>
<svg style="position:absolute;left:647px;top:927px;" width="7" height="12" viewBox="0 0 7 12"><path d="M6 0 L0 6 L6 12Z" fill="#bbb"/></svg>
<svg style="position:absolute;left:677px;top:927px;" width="7" height="12" viewBox="0 0 7 12"><path d="M0 0 L6 6 L0 12Z" fill="#bbb"/></svg>
<div style="left:705px;top:932px;width:13px;height:2px;background:#333;"></div>
<div style="left:727px;top:933px;width:267px;height:1px;background:#d0d0d0;"></div>
<div style="left:855px;top:926px;width:6px;height:15px;background:#222;border-radius:3px"></div>
<svg style="position:absolute;left:1011px;top:926px;" width="14" height="14" viewBox="0 0 14 14"><path d="M7 0 V14 M0 7 H14" stroke="#333" stroke-width="1.5"/></svg>
<span class="t" style="left:1040px;top:925.96px;font-size:15.4px;color:#333;">100%</span>
<div style="left:1085px;top:69px;width:49px;height:876px;background:#e8e8ea;"></div>
<svg style="position:absolute;left:1107px;top:78px;" width="7" height="12" viewBox="0 0 7 12"><path d="M0 0 L7 6 L0 12Z" fill="#a8a8a8"/></svg>
<svg style="position:absolute;left:1095px;top:108px;" width="30" height="30" viewBox="0 0 30 30"><path d="M5.5 24 V5.5 H24 M18 5.5 V24 M18 11.7 H24 M5.5 18 H24 M11.7 18 V24" fill="none" stroke="#8f8f8f" stroke-width="2"/></svg>
<div style="left:1090px;top:145px;width:40px;height:35px;background:#f4f4f6;"></div>
<svg style="position:absolute;left:1099px;top:152px;" width="22" height="22" viewBox="0 0 22 22"><rect x="0" y="0" width="6" height="6" fill="#3d8ef0"/><rect x="8" y="0" width="6" height="6" fill="#3d8ef0"/><rect x="16" y="0" width="6" height="6" fill="#3d8ef0"/><rect x="0" y="8" width="6" height="6" fill="#3d8ef0"/><rect x="0" y="16" width="6" height="6" fill="#3d8ef0"/><circle cx="15.5" cy="15.5" r="6.5" fill="#3d8ef0"/><rect x="14.5" y="13.5" width="2" height="6" fill="#fff"/><rect x="14.5" y="10.5" width="2" height="2" fill="#fff"/></svg>
<svg style="position:absolute;left:1099px;top:192px;" width="21" height="21" viewBox="0 0 21 21"><path d="M3 3 H18 V18 H3Z" fill="none" stroke="#555a66" stroke-width="2.2"/><path d="M0 3 H3 M18 3 H21 M0 18 H3 M18 18 H21 M3 0 V3 M18 0 V3 M3 18 V21 M18 18 V21" stroke="#555a66" stroke-width="1.5"/></svg>
<svg style="position:absolute;left:1099px;top:234px;" width="21" height="17" viewBox="0 0 21 17"><rect x="1" y="1" width="19" height="15" fill="none" stroke="#555a66" stroke-width="2"/><path d="M10 6 H16 L13 10Z" fill="#555a66"/></svg>
<svg style="position:absolute;left:1098px;top:274px;" width="23" height="16" viewBox="0 0 23 16"><path d="M3 3 H1 V13 H3" fill="none" stroke="#555a66" stroke-width="1.3"/><rect x="6" y="1" width="16" height="5" fill="none" stroke="#555a66" stroke-width="1.8"/><rect x="6" y="10" width="12" height="5" fill="none" stroke="#555a66" stroke-width="1.8"/></svg>
<svg style="position:absolute;left:1095px;top:306px;" width="30" height="30" viewBox="0 0 30 30"><path d="M15.2 11.7 L11.8 8.3 A4.3 4.3 0 0 0 5.7 14.4 L9.3 17.6 M11 13 L17.5 19.5 M18.8 15.2 L22 18.4 A4.3 4.3 0 0 1 15.9 24.5 L12.6 21.2" fill="none" stroke="#555a66" stroke-width="2.3" stroke-linecap="round"/></svg>
<div style="left:1134px;top:69px;width:308px;height:876px;background:#f4f4f6;"></div>
<div style="left:1134px;top:101px;width:307px;height:1px;background:#e2e2e4;"></div>
<span class="t" style="left:1147px;top:77.71px;font-size:15.7px;color:#1e1e1e;">Cell Attributes</span>
<svg style="position:absolute;left:1420px;top:77px;" width="16" height="15" viewBox="0 0 16 15"><path d="M15 1 L4 12" stroke="#3d8ef0" stroke-width="2.4"/><path d="M1 5 V14 H10 Z" fill="#3d8ef0"/></svg>
<div style="left:1136px;top:103px;width:305px;height:31px;background:#d9d9dd;"></div>
<div style="left:1212px;top:103px;width:76px;height:31px;background:#ebebee;"></div>
<span class="t" style="left:1148px;top:111.30px;font-size:15px;color:#1e1e1e;">Expand</span>
<span class="t" style="left:1233px;top:111.30px;font-size:15px;color:#1e1e1e;">Style</span>
<span class="t" style="left:1303px;top:111.30px;font-size:15px;color:#1e1e1e;">Display</span>
<span class="t" style="left:1382px;top:111.30px;font-size:15px;color:#1e1e1e;">Other</span>
<div style="left:1440px;top:69px;width:1px;height:876px;background:#e0e0e2;"></div>
<div style="left:1147px;top:147px;width:280px;height:25px;background:#d9d9dc;"></div>
<div style="left:1148px;top:148px;width:254px;height:23px;background:#ffffff;"></div>
<div style="left:1402px;top:147px;width:25px;height:25px;background:#d9d9dc;"></div>
<svg style="position:absolute;left:1408px;top:156px;" width="12" height="8" viewBox="0 0 12 8"><path d="M1 1.5 L6 6.5 L11 1.5" fill="none" stroke="#555" stroke-width="1.3"/></svg>
<span class="t" style="left:1153px;top:152.30px;font-size:15px;color:#1e1e1e;">Custom Style</span>
<div style="left:1147px;top:179px;width:280px;height:52px;background:#dcdcde;"></div>
<div style="left:1148px;top:180px;width:278px;height:50px;background:#ffffff;"></div>
<div style="left:1241px;top:180px;width:92px;height:50px;background:#4499f6;"></div>
<span class="t" style="left:895px;width:600px;text-align:center;top:198.30px;font-size:15px;color:#1e1e1e;">Text</span>
<span class="t" style="left:987px;width:600px;text-align:center;top:198.30px;font-size:15px;color:#1e1e1e;">Cell</span>
<span class="t" style="left:1080px;width:600px;text-align:center;top:198.30px;font-size:15px;color:#1e1e1e;">Alignment</span>
<div style="left:1147px;top:236px;width:280px;height:30px;background:#e8e8ea;"></div>
<span class="t" style="left:1152px;top:245.30px;font-size:15px;color:#1e1e1e;">Border</span>
<svg style="position:absolute;left:1409px;top:249px;" width="11" height="6" viewBox="0 0 11 6"><path d="M0 0 H11 L5.5 5.5Z" fill="#a8a8a8"/></svg>
<span class="t" style="left:1153px;top:280.30px;font-size:15px;color:#1e1e1e;">Style</span>
<div style="left:1247px;top:274px;width:180px;height:25px;background:#d9d9dc;"></div>
<div style="left:1248px;top:275px;width:154px;height:23px;background:#ffffff;"></div>
<div style="left:1402px;top:274px;width:25px;height:25px;background:#d9d9dc;"></div>
<svg style="position:absolute;left:1408px;top:282px;" width="12" height="8" viewBox="0 0 12 8"><path d="M1 1.5 L6 6.5 L11 1.5" fill="none" stroke="#555" stroke-width="1.3"/></svg>
<div style="left:1252px;top:286px;width:141px;height:1px;background:#333;"></div>
<span class="t" style="left:1153px;top:319.30px;font-size:15px;color:#1e1e1e;">Color</span>
<div style="left:1247px;top:314px;width:180px;height:25px;background:#dcdcde;"></div>
<div style="left:1248px;top:315px;width:153px;height:23px;background:#000000;"></div>
<div style="left:1401px;top:315px;width:25px;height:23px;background:#ffffff;"></div>
<svg style="position:absolute;left:1408px;top:322px;" width="12" height="8" viewBox="0 0 12 8"><path d="M1 1.5 L6 6.5 L11 1.5" fill="none" stroke="#555" stroke-width="1.3"/></svg>
<span class="t" style="left:1153px;top:359.30px;font-size:15px;color:#1e1e1e;">outBorder</span>
<div style="left:1247px;top:354px;width:180px;height:25px;background:#dcdcde;"></div>
<div style="left:1248px;top:355px;width:178px;height:23px;background:#ffffff;"></div>
<svg style="position:absolute;left:1326px;top:356px;" width="22" height="20" viewBox="0 0 22 20"><path d="M1.5 1.5 H20.5 V18.5 H1.5Z M11 1.5 V18.5 M1.5 10 H20.5" stroke="#777" stroke-width="1" stroke-dasharray="1 1" fill="none"/><path d="M1.5 1.5 H20.5 V18.5 H1.5Z" stroke="#222" stroke-width="1.8" fill="none"/></svg>
<div style="left:1247px;top:387px;width:45px;height:24px;background:#dcdcde;"></div>
<div style="left:1248px;top:388px;width:43px;height:22px;background:#ffffff;"></div>
<svg style="position:absolute;left:1259px;top:389px;" width="22" height="20" viewBox="0 0 22 20"><path d="M1.5 1.5 H20.5 V18.5 H1.5Z M11 1.5 V18.5 M1.5 10 H20.5" stroke="#777" stroke-width="1" stroke-dasharray="1 1" fill="none"/><path d="M1.5 1.5 H20.5" stroke="#222" stroke-width="1.8" fill="none"/></svg>
<div style="left:1292px;top:387px;width:45px;height:24px;background:#dcdcde;"></div>
<div style="left:1293px;top:388px;width:43px;height:22px;background:#ffffff;"></div>
<svg style="position:absolute;left:1303px;top:389px;" width="22" height="20" viewBox="0 0 22 20"><path d="M1.5 1.5 H20.5 V18.5 H1.5Z M11 1.5 V18.5 M1.5 10 H20.5" stroke="#777" stroke-width="1" stroke-dasharray="1 1" fill="none"/><path d="M1.5 1.5 V18.5" stroke="#222" stroke-width="1.8" fill="none"/></svg>
<div style="left:1337px;top:387px;width:45px;height:24px;background:#dcdcde;"></div>
<div style="left:1338px;top:388px;width:43px;height:22px;background:#ffffff;"></div>
<svg style="position:absolute;left:1349px;top:389px;" width="22" height="20" viewBox="0 0 22 20"><path d="M1.5 1.5 H20.5 V18.5 H1.5Z M11 1.5 V18.5 M1.5 10 H20.5" stroke="#777" stroke-width="1" stroke-dasharray="1 1" fill="none"/><path d="M1.5 18.5 H20.5" stroke="#222" stroke-width="1.8" fill="none"/></svg>
<div style="left:1382px;top:387px;width:45px;height:24px;background:#dcdcde;"></div>
<div style="left:1383px;top:388px;width:43px;height:22px;background:#ffffff;"></div>
<svg style="position:absolute;left:1393px;top:389px;" width="22" height="20" viewBox="0 0 22 20"><path d="M1.5 1.5 H20.5 V18.5 H1.5Z M11 1.5 V18.5 M1.5 10 H20.5" stroke="#777" stroke-width="1" stroke-dasharray="1 1" fill="none"/><path d="M20.5 1.5 V18.5" stroke="#222" stroke-width="1.8" fill="none"/></svg>
<span class="t" style="left:1153px;top:431.30px;font-size:15px;color:#1e1e1e;">inBorder</span>
<div style="left:1247px;top:426px;width:180px;height:25px;background:#dcdcde;"></div>
<div style="left:1248px;top:427px;width:178px;height:23px;background:#ffffff;"></div>
<svg style="position:absolute;left:1326px;top:428px;" width="22" height="20" viewBox="0 0 22 20"><path d="M1.5 1.5 H20.5 V18.5 H1.5Z M11 1.5 V18.5 M1.5 10 H20.5" stroke="#777" stroke-width="1" stroke-dasharray="1 1" fill="none"/><path d="M11 1.5 V18.5 M1.5 10 H20.5" stroke="#222" stroke-width="1.8" fill="none"/></svg>
<div style="left:1247px;top:459px;width:90px;height:24px;background:#dcdcde;"></div>
<div style="left:1248px;top:460px;width:88px;height:22px;background:#ffffff;"></div>
<svg style="position:absolute;left:1281px;top:461px;" width="22" height="20" viewBox="0 0 22 20"><path d="M1.5 1.5 H20.5 V18.5 H1.5Z M11 1.5 V18.5 M1.5 10 H20.5" stroke="#777" stroke-width="1" stroke-dasharray="1 1" fill="none"/><path d="M1.5 10 H20.5" stroke="#222" stroke-width="1.8" fill="none"/></svg>
<div style="left:1337px;top:459px;width:90px;height:24px;background:#dcdcde;"></div>
<div style="left:1338px;top:460px;width:88px;height:22px;background:#ffffff;"></div>
<svg style="position:absolute;left:1371px;top:461px;" width="22" height="20" viewBox="0 0 22 20"><path d="M1.5 1.5 H20.5 V18.5 H1.5Z M11 1.5 V18.5 M1.5 10 H20.5" stroke="#777" stroke-width="1" stroke-dasharray="1 1" fill="none"/><path d="M11 1.5 V18.5" stroke="#222" stroke-width="1.8" fill="none"/></svg>
<div style="left:1147px;top:492px;width:280px;height:29px;background:#e8e8ea;"></div>
<span class="t" style="left:1152px;top:499.30px;font-size:15px;color:#1e1e1e;">BG</span>
<svg style="position:absolute;left:1409px;top:504px;" width="11" height="6" viewBox="0 0 11 6"><path d="M0 0 H11 L5.5 5.5Z" fill="#a8a8a8"/></svg>
<span class="t" style="left:1153px;top:534.30px;font-size:15px;color:#1e1e1e;">Fill</span>
<div style="left:1207px;top:527px;width:219px;height:28px;background:#d9d9dc;"></div>
<div style="left:1208px;top:528px;width:194px;height:26px;background:#ffffff;"></div>
<div style="left:1402px;top:527px;width:24px;height:28px;background:#d9d9dc;"></div>
<svg style="position:absolute;left:1408px;top:537px;" width="12" height="8" viewBox="0 0 12 8"><path d="M1 1.5 L6 6.5 L11 1.5" fill="none" stroke="#555" stroke-width="1.3"/></svg>
<span class="t" style="left:1212px;top:534.30px;font-size:15px;color:#1e1e1e;">Image</span>
<div style="left:1206px;top:562px;width:221px;height:181px;background:#f4f4f6;border:1px solid #9a9a9a;border-radius:3px;box-sizing:border-box"></div>
<div style="left:1206px;top:749px;width:220px;height:21px;background:#f7f7f9;"></div>
<span class="t" style="left:1015px;width:600px;text-align:center;top:754.30px;font-size:15px;color:#1e1e1e;">Select Image</span>
<div style="left:1207px;top:779px;width:220px;height:51px;background:#ffffff;box-shadow:inset 0 0 0 1px #e0e0e0"></div>
<div style="left:1208px;top:780px;width:54px;height:49px;background:#4499f6;"></div>
<span class="t" style="left:1211px;top:787.13px;font-size:15.2px;color:#1e1e1e;">Default</span>
<span class="t" style="left:1216px;top:806.13px;font-size:15.2px;color:#1e1e1e;">Image</span>
<span class="t" style="left:1266px;top:787.13px;font-size:15.2px;color:#1e1e1e;">Titled</span>
<span class="t" style="left:1265px;top:806.13px;font-size:15.2px;color:#1e1e1e;">Image</span>
<span class="t" style="left:1318px;top:787.13px;font-size:15.2px;color:#1e1e1e;">Extend</span>
<span class="t" style="left:1324px;top:806.13px;font-size:15.2px;color:#1e1e1e;">Image</span>
<span class="t" style="left:1373px;top:787.13px;font-size:15.2px;color:#1e1e1e;">Adjust</span>
<span class="t" style="left:1373px;top:806.13px;font-size:15.2px;color:#1e1e1e;">Image</span>
<div style="left:413px;top:439px;width:632px;height:443px;background:#f3f3f5;box-shadow:0 0 12px 3px rgba(0,0,0,0.28);border:1px solid #555;box-sizing:border-box"></div>
<div style="left:414px;top:440px;width:630px;height:38px;background:#ffffff;"></div>
<svg style="position:absolute;left:424px;top:448px;" width="20" height="20" viewBox="0 0 20 20"><g transform="scale(1.0)"><path d="M4 0 H6 V7.5 H12 V13.5 H6 V20 H0 V4 Q0 0 4 0Z" fill="#0a7bd8"/><path d="M7.5 0 H20 V15 Q20 20 15 20 H13.5 V6 H7.5Z" fill="#22a9e6"/></g></svg>
<span class="t" style="left:449px;top:451.30px;font-size:15px;color:#1e1e1e;">Open</span>
<svg style="position:absolute;left:1016px;top:452px;" width="14" height="14" viewBox="0 0 14 14"><path d="M0.5 0.5 L13.5 13.5 M13.5 0.5 L0.5 13.5" stroke="#222" stroke-width="1.3"/></svg>
<span class="t" style="left:429px;top:500.30px;font-size:15px;color:#1e1e1e;">Look <u>I</u>n:</span>
<div style="left:500px;top:494px;width:373px;height:26px;background:#ffffff;border:1px solid #cfcfcf;border-radius:2px;box-sizing:border-box"></div>
<div style="left:851px;top:495px;width:21px;height:24px;background:#e4e4e6;"></div>
<svg style="position:absolute;left:856px;top:504px;" width="11" height="6" viewBox="0 0 11 6"><path d="M0 0 H11 L5.5 5.5Z" fill="#4a5a7a"/></svg>
<svg style="position:absolute;left:503px;top:497px;" width="20" height="18" viewBox="0 0 20 18"><path d="M0 3 H20 V17 Q20 18 19 18 H1 Q0 18 0 17Z" fill="#ffc93a"/><path d="M11 0 H19 Q20 0 20 1 V4 H9Z" fill="#b8862a"/><path d="M0 3 H11 V5 H0Z" fill="#ffc93a"/></svg>
<span class="t" style="left:528px;top:500.30px;font-size:15px;color:#1e1e1e;">picture</span>
<div style="left:886px;top:494px;width:25px;height:25px;background:linear-gradient(#f8f8f8,#e6e6e6);border:1px solid #b8b8b8;border-radius:3px;box-sizing:border-box"></div>
<svg style="position:absolute;left:886px;top:494px;" width="25" height="25" viewBox="0 0 25 25"><path d="M12.5 3 L21 12 H16 V21 H9 V12 H4Z" fill="#2cc05a"/></svg>
<div style="left:918px;top:494px;width:25px;height:25px;background:linear-gradient(#f8f8f8,#e6e6e6);border:1px solid #b8b8b8;border-radius:3px;box-sizing:border-box"></div>
<svg style="position:absolute;left:918px;top:494px;" width="25" height="25" viewBox="0 0 25 25"><path d="M3 13 L12.5 4 L22 13" fill="none" stroke="#ee6a4a" stroke-width="2.2"/><path d="M6 12 V21 H19 V12" fill="#d8d8d8" stroke="#ee6a4a" stroke-width="0"/><rect x="10" y="14" width="5" height="5" fill="#999"/></svg>
<div style="left:949px;top:494px;width:25px;height:25px;background:linear-gradient(#f8f8f8,#e6e6e6);border:1px solid #b8b8b8;border-radius:3px;box-sizing:border-box"></div>
<svg style="position:absolute;left:949px;top:494px;" width="25" height="25" viewBox="0 0 25 25"><path d="M4 6 H21 V19 H4Z" fill="#ffc93a"/><path d="M13 4 H21 V8 H11Z" fill="#b8862a"/><path d="M17 12 V22 M12 17 H22" stroke="#1fbf4a" stroke-width="2.4"/></svg>
<div style="left:981px;top:497px;width:24px;height:20px;background:linear-gradient(#f8f8f8,#e6e6e6);border:1px solid #b8b8b8;border-radius:3px;box-sizing:border-box"></div>
<svg style="position:absolute;left:981px;top:497px;" width="24" height="20" viewBox="0 0 24 20"><rect x="3.5" y="3.5" width="17" height="13" fill="#f5f2e2" stroke="#8a8a8a" stroke-width="1"/><g fill="#1fbf4a"><rect x="4" y="5" width="2" height="2"/></g><g fill="#f0a818"><rect x="12" y="5" width="2" height="2"/></g><g fill="#3d8ef0"><rect x="4" y="9" width="2" height="2"/><rect x="12" y="9" width="2" height="2"/></g><g fill="#e06060"><rect x="12" y="13" width="2" height="2"/></g><g fill="#a090e0"><rect x="4" y="13" width="2" height="2"/></g><path d="M7 6 H10 M7 10 H10 M7 14 H10 M15 6 H18 M15 10 H18 M15 14 H18" stroke="#444" stroke-width="1" stroke-dasharray="1 0.6"/></svg>
<div style="left:1006px;top:497px;width:24px;height:20px;background:linear-gradient(#f8f8f8,#e6e6e6);border:1px solid #b8b8b8;border-radius:3px;box-sizing:border-box"></div>
<svg style="position:absolute;left:1006px;top:497px;" width="24" height="20" viewBox="0 0 24 20"><rect x="3.5" y="3.5" width="17" height="13" fill="#f5f2e2" stroke="#8a8a8a" stroke-width="1"/><g fill="#1fbf4a"><rect x="4" y="5" width="2" height="2"/></g><g fill="#3d8ef0"><rect x="4" y="9" width="2" height="2"/></g><g fill="#a090e0"><rect x="4" y="13" width="2" height="2"/></g><path d="M7 6 H20 M7 10 H20 M7 14 H20" stroke="#444" stroke-width="1" stroke-dasharray="2 0.8"/></svg>
<div style="left:429px;top:534px;width:601px;height:210px;background:#ffffff;border:1px solid #d8d8d8;box-sizing:border-box"></div>
<div style="left:430px;top:559px;width:145px;height:22px;background:#4499f6;"></div>
<svg style="position:absolute;left:432px;top:537px;" width="20" height="18" viewBox="0 0 20 18"><path d="M0 3 H20 V17 Q20 18 19 18 H1 Q0 18 0 17Z" fill="#ffc93a"/><path d="M11 0 H19 Q20 0 20 1 V4 H9Z" fill="#b8862a"/><path d="M0 3 H11 V5 H0Z" fill="#ffc93a"/></svg>
<span class="t" style="left:456.5px;top:539.46px;font-size:15.4px;color:#1e1e1e;">chart</span>
<svg style="position:absolute;left:431px;top:559px;" width="21" height="21" viewBox="0 0 21 21"><path d="M4.5 0.5 H14.5 L17 3 V20.5 H4.5Z" fill="#fff" stroke="#222" stroke-width="1"/><rect x="0.5" y="5.5" width="20" height="10" fill="#7e0808" stroke="#222" stroke-width="1"/><text x="10.5" y="13.6" font-size="8.4" font-weight="bold" text-anchor="middle" fill="#fff" font-family="Liberation Sans" letter-spacing="-0.2">PNG</text></svg>
<span class="t" style="left:456.5px;top:561.96px;font-size:15.4px;color:#fff;">icon_bicycle.png</span>
<svg style="position:absolute;left:431px;top:582px;" width="21" height="21" viewBox="0 0 21 21"><path d="M4.5 0.5 H14.5 L17 3 V20.5 H4.5Z" fill="#fff" stroke="#222" stroke-width="1"/><rect x="0.5" y="5.5" width="20" height="10" fill="#7e0808" stroke="#222" stroke-width="1"/><text x="10.5" y="13.6" font-size="8.4" font-weight="bold" text-anchor="middle" fill="#fff" font-family="Liberation Sans" letter-spacing="-0.2">PNG</text></svg>
<span class="t" style="left:456.5px;top:584.46px;font-size:15.4px;color:#1e1e1e;">icon_car.png</span>
<svg style="position:absolute;left:431px;top:604px;" width="21" height="21" viewBox="0 0 21 21"><path d="M4.5 0.5 H14.5 L17 3 V20.5 H4.5Z" fill="#fff" stroke="#222" stroke-width="1"/><rect x="0.5" y="5.5" width="20" height="10" fill="#7e0808" stroke="#222" stroke-width="1"/><text x="10.5" y="13.6" font-size="8.4" font-weight="bold" text-anchor="middle" fill="#fff" font-family="Liberation Sans" letter-spacing="-0.2">PNG</text></svg>
<span class="t" style="left:456.5px;top:606.96px;font-size:15.4px;color:#1e1e1e;">icon_motorcycle.png</span>
<svg style="position:absolute;left:431px;top:626px;" width="21" height="21" viewBox="0 0 21 21"><path d="M4.5 0.5 H14.5 L17 3 V20.5 H4.5Z" fill="#fff" stroke="#222" stroke-width="1"/><rect x="0.5" y="5.5" width="20" height="10" fill="#7e0808" stroke="#222" stroke-width="1"/><text x="10.5" y="13.6" font-size="8.4" font-weight="bold" text-anchor="middle" fill="#fff" font-family="Liberation Sans" letter-spacing="-0.2">PNG</text></svg>
<span class="t" style="left:456.5px;top:629.46px;font-size:15.4px;color:#1e1e1e;">icon_top1-18.png</span>
<svg style="position:absolute;left:431px;top:649px;" width="21" height="21" viewBox="0 0 21 21"><path d="M4.5 0.5 H14.5 L17 3 V20.5 H4.5Z" fill="#fff" stroke="#222" stroke-width="1"/><rect x="0.5" y="5.5" width="20" height="10" fill="#7e0808" stroke="#222" stroke-width="1"/><text x="10.5" y="13.6" font-size="8.4" font-weight="bold" text-anchor="middle" fill="#fff" font-family="Liberation Sans" letter-spacing="-0.2">PNG</text></svg>
<span class="t" style="left:456.5px;top:651.96px;font-size:15.4px;color:#1e1e1e;">icon_top2-19.png</span>
<svg style="position:absolute;left:431px;top:672px;" width="21" height="21" viewBox="0 0 21 21"><path d="M4.5 0.5 H14.5 L17 3 V20.5 H4.5Z" fill="#fff" stroke="#222" stroke-width="1"/><rect x="0.5" y="5.5" width="20" height="10" fill="#7e0808" stroke="#222" stroke-width="1"/><text x="10.5" y="13.6" font-size="8.4" font-weight="bold" text-anchor="middle" fill="#fff" font-family="Liberation Sans" letter-spacing="-0.2">PNG</text></svg>
<span class="t" style="left:456.5px;top:674.46px;font-size:15.4px;color:#1e1e1e;">icon_top3-20.png</span>
<svg style="position:absolute;left:431px;top:694px;" width="21" height="21" viewBox="0 0 21 21"><path d="M4.5 0.5 H14.5 L17 3 V20.5 H4.5Z" fill="#fff" stroke="#222" stroke-width="1"/><rect x="0.5" y="5.5" width="20" height="10" fill="#7e0808" stroke="#222" stroke-width="1"/><text x="10.5" y="13.6" font-size="8.4" font-weight="bold" text-anchor="middle" fill="#fff" font-family="Liberation Sans" letter-spacing="-0.2">PNG</text></svg>
<span class="t" style="left:456.5px;top:696.96px;font-size:15.4px;color:#1e1e1e;">icon_top4.png</span>
<svg style="position:absolute;left:601px;top:536px;" width="21" height="21" viewBox="0 0 21 21"><path d="M4.5 0.5 H14.5 L17 3 V20.5 H4.5Z" fill="#fff" stroke="#222" stroke-width="1"/><rect x="0.5" y="5.5" width="20" height="10" fill="#7e0808" stroke="#222" stroke-width="1"/><text x="10.5" y="13.6" font-size="8.4" font-weight="bold" text-anchor="middle" fill="#fff" font-family="Liberation Sans" letter-spacing="-0.2">PNG</text></svg>
<span class="t" style="left:626.5px;top:539.46px;font-size:15.4px;color:#1e1e1e;">icon_top5.png</span>
<svg style="position:absolute;left:601px;top:559px;" width="21" height="21" viewBox="0 0 21 21"><path d="M4.5 0.5 H14.5 L17 3 V20.5 H4.5Z" fill="#fff" stroke="#222" stroke-width="1"/><rect x="0.5" y="5.5" width="20" height="10" fill="#7e0808" stroke="#222" stroke-width="1"/><text x="10.5" y="13.6" font-size="8.4" font-weight="bold" text-anchor="middle" fill="#fff" font-family="Liberation Sans" letter-spacing="-0.2">PNG</text></svg>
<span class="t" style="left:626.5px;top:561.96px;font-size:15.4px;color:#1e1e1e;">icon_top6.png</span>
<svg style="position:absolute;left:601px;top:582px;" width="21" height="21" viewBox="0 0 21 21"><path d="M4.5 0.5 H14.5 L17 3 V20.5 H4.5Z" fill="#fff" stroke="#222" stroke-width="1"/><rect x="0.5" y="5.5" width="20" height="10" fill="#7e0808" stroke="#222" stroke-width="1"/><text x="10.5" y="13.6" font-size="8.4" font-weight="bold" text-anchor="middle" fill="#fff" font-family="Liberation Sans" letter-spacing="-0.2">PNG</text></svg>
<span class="t" style="left:626.5px;top:584.46px;font-size:15.4px;color:#1e1e1e;">icon_top7.png</span>
<svg style="position:absolute;left:601px;top:604px;" width="21" height="21" viewBox="0 0 21 21"><path d="M4.5 0.5 H14.5 L17 3 V20.5 H4.5Z" fill="#fff" stroke="#222" stroke-width="1"/><rect x="0.5" y="5.5" width="20" height="10" fill="#7e0808" stroke="#222" stroke-width="1"/><text x="10.5" y="13.6" font-size="8.4" font-weight="bold" text-anchor="middle" fill="#fff" font-family="Liberation Sans" letter-spacing="-0.2">PNG</text></svg>
<span class="t" style="left:626.5px;top:606.96px;font-size:15.4px;color:#1e1e1e;">icon_top8.png</span>
<svg style="position:absolute;left:601px;top:626px;" width="21" height="21" viewBox="0 0 21 21"><path d="M4.5 0.5 H14.5 L17 3 V20.5 H4.5Z" fill="#fff" stroke="#222" stroke-width="1"/><rect x="0.5" y="5.5" width="20" height="10" fill="#7e0808" stroke="#222" stroke-width="1"/><text x="10.5" y="13.6" font-size="8.4" font-weight="bold" text-anchor="middle" fill="#fff" font-family="Liberation Sans" letter-spacing="-0.2">PNG</text></svg>
<span class="t" style="left:626.5px;top:629.46px;font-size:15.4px;color:#1e1e1e;">icon_top9.png</span>
<svg style="position:absolute;left:601px;top:649px;" width="21" height="21" viewBox="0 0 21 21"><path d="M4.5 0.5 H14.5 L17 3 V20.5 H4.5Z" fill="#fff" stroke="#222" stroke-width="1"/><rect x="0.5" y="5.5" width="20" height="10" fill="#7e0808" stroke="#222" stroke-width="1"/><text x="10.5" y="13.6" font-size="8.4" font-weight="bold" text-anchor="middle" fill="#fff" font-family="Liberation Sans" letter-spacing="-0.2">PNG</text></svg>
<span class="t" style="left:626.5px;top:651.96px;font-size:15.4px;color:#1e1e1e;">icon_top10.png</span>
<svg style="position:absolute;left:601px;top:672px;" width="21" height="21" viewBox="0 0 21 21"><path d="M4.5 0.5 H14.5 L17 3 V20.5 H4.5Z" fill="#fff" stroke="#222" stroke-width="1"/><rect x="0.5" y="5.5" width="20" height="10" fill="#7e0808" stroke="#222" stroke-width="1"/><text x="10.5" y="13.6" font-size="8.4" font-weight="bold" text-anchor="middle" fill="#fff" font-family="Liberation Sans" letter-spacing="-0.2">PNG</text></svg>
<span class="t" style="left:626.5px;top:674.46px;font-size:15.4px;color:#1e1e1e;">logo-ch.png</span>
<svg style="position:absolute;left:601px;top:694px;" width="21" height="21" viewBox="0 0 21 21"><path d="M4.5 0.5 H14.5 L17 3 V20.5 H4.5Z" fill="#fff" stroke="#222" stroke-width="1"/><rect x="0.5" y="5.5" width="20" height="10" fill="#7e0808" stroke="#222" stroke-width="1"/><text x="10.5" y="13.6" font-size="8.4" font-weight="bold" text-anchor="middle" fill="#fff" font-family="Liberation Sans" letter-spacing="-0.2">PNG</text></svg>
<span class="t" style="left:626.5px;top:696.96px;font-size:15.4px;color:#1e1e1e;">weather-01.png</span>
<svg style="position:absolute;left:771px;top:537px;" width="21" height="21" viewBox="0 0 21 21"><path d="M4.5 0.5 H14.5 L17 3 V20.5 H4.5Z" fill="#fff" stroke="#222" stroke-width="1"/><rect x="0.5" y="5.5" width="20" height="10" fill="#7e0808" stroke="#222" stroke-width="1"/><text x="10.5" y="13.6" font-size="8.4" font-weight="bold" text-anchor="middle" fill="#fff" font-family="Liberation Sans" letter-spacing="-0.2">PNG</text></svg>
<span class="t" style="left:797px;top:539.96px;font-size:15.4px;color:#1e1e1e;">weather-02.png</span>
<div style="left:430px;top:723px;width:599px;height:20px;background:#f0f0ea;"></div>
<div style="left:452px;top:723px;width:486px;height:20px;background:#dcdcdc;"></div>
<div style="left:430px;top:723px;width:22px;height:20px;background:#ffffff;"></div>
<svg style="position:absolute;left:435px;top:727px;" width="10" height="12" viewBox="0 0 10 12"><path d="M7 1 L2 6 L7 11" fill="none" stroke="#555" stroke-width="1.6"/></svg>
<svg style="position:absolute;left:1013px;top:727px;" width="10" height="12" viewBox="0 0 10 12"><path d="M3 1 L8 6 L3 11" fill="none" stroke="#555" stroke-width="1.6"/></svg>
<span class="t" style="left:429px;top:765.30px;font-size:15px;color:#1e1e1e;">File <u>N</u>ame:</span>
<div style="left:534px;top:759px;width:496px;height:26px;background:#ffffff;border:1px solid #d8d8d8;box-sizing:border-box"></div>
<span class="t" style="left:537px;top:763.88px;font-size:15.5px;color:#1e1e1e;">icon_bicycle.png</span>
<span class="t" style="left:429px;top:798.30px;font-size:15px;color:#1e1e1e;">Files of <u>T</u>ype:</span>
<div style="left:534px;top:793px;width:496px;height:25px;background:#ffffff;border:1px solid #cfcfcf;border-radius:2px;box-sizing:border-box"></div>
<div style="left:1008px;top:794px;width:21px;height:23px;background:#e4e4e6;"></div>
<svg style="position:absolute;left:1013px;top:803px;" width="11" height="6" viewBox="0 0 11 6"><path d="M0 0 H11 L5.5 5.5Z" fill="#4a5a7a"/></svg>
<span class="t" style="left:537px;top:797.63px;font-size:15.8px;color:#1e1e1e;">Image Files (.gif, .jpg, .png, .bmp)</span>
<div style="left:429px;top:851px;width:16px;height:16px;background:#f6f6f8;border:1px solid #8a8a8a;box-sizing:border-box"></div>
<span class="t" style="left:450px;top:851.30px;font-size:15px;color:#1e1e1e;">Compress Image</span>
<div style="left:738px;top:845px;width:143px;height:24px;background:#ffffff;border:1px solid #d8d8d8;box-sizing:border-box"></div>
<div style="left:888px;top:845px;width:143px;height:24px;background:#ffffff;border:1px solid #d8d8d8;box-sizing:border-box"></div>
<span class="t" style="left:509px;width:600px;text-align:center;top:850.30px;font-size:15px;color:#1e1e1e;">Open</span>
<span class="t" style="left:660px;width:600px;text-align:center;top:850.30px;font-size:15px;color:#1e1e1e;">Cancel</span>
<div style="left:410px;top:436px;width:634px;height:444px;background:transparent;border:3px solid #fb4141;box-sizing:border-box;box-shadow:1px 2px 3px rgba(0,0,0,0.3), inset 1px 2px 3px rgba(0,0,0,0.25)"></div>
<div style="left:1203px;top:746px;width:226px;height:27px;background:transparent;border:3px solid #fb4141;box-sizing:border-box;box-shadow:1px 2px 3px rgba(0,0,0,0.3), inset 1px 2px 3px rgba(0,0,0,0.25)"></div>
<div style="left:1204px;top:524px;width:225px;height:33px;background:transparent;border:3px solid #fb4141;box-sizing:border-box;box-shadow:1px 2px 3px rgba(0,0,0,0.3), inset 1px 2px 3px rgba(0,0,0,0.25)"></div>
<svg style="position:absolute;left:1030px;top:550px;filter:drop-shadow(1px 3px 2.5px rgba(0,0,0,0.4))" width="200" height="220" viewBox="0 0 200 220"><path d="M188.7 7 V188" stroke="#fb4141" stroke-width="3"/><path d="M184 187 H193.5 L188.7 196Z" fill="#fb4141"/><path d="M171 208.5 L20 126" stroke="#fb4141" stroke-width="3.2" stroke-linecap="round"/><path d="M15 123.8 L25 124 L21 131.5Z" fill="#fb4141"/></svg>
<svg style="position:absolute;left:1180px;top:466px;filter:drop-shadow(1px 3px 2.5px rgba(0,0,0,0.4))" width="48" height="48" viewBox="0 0 48 48"><circle cx="24" cy="24" r="20" fill="#fc4545"/><text x="24" y="35" font-size="28.5" text-anchor="middle" fill="#fff" font-family="Liberation Sans">5</text></svg>
<div style="left:1442px;top:0px;width:1px;height:946px;background:#1d3b58;"></div>
<div style="left:0px;top:945px;width:1443px;height:1px;background:#3a4a5a;"></div>
</body></html>
